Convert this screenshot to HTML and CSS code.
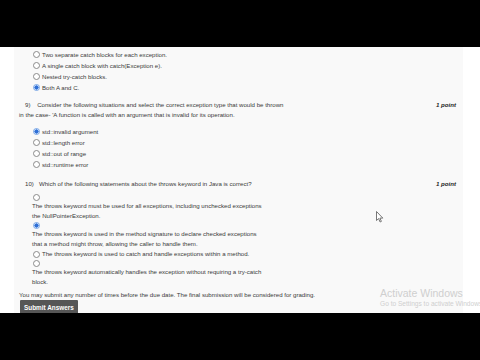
FILE: index.html
```html
<!DOCTYPE html>
<html>
<head>
<meta charset="utf-8">
<link rel="stylesheet" href="styles.css">
</head>
<body>
<div class="topbar"></div>
<div class="stage">
  <div class="panel">
    <div class="opts q8">
      <div class="opt"><span class="radio"></span>Two separate catch blocks for each exception.</div>
      <div class="opt"><span class="radio"></span>A single catch block with catch(Exception e).</div>
      <div class="opt"><span class="radio"></span>Nested try-catch blocks.</div>
      <div class="opt"><span class="radio on"></span>Both A and C.</div>
    </div>

    <div class="qhead q9">
      <div class="qtext">9)&nbsp;&nbsp;&nbsp; Consider the following situations and select the correct exception type that would be thrown<br>in the case- 'A function is called with an argument that is invalid for its operation.</div>
      <div class="points">1 point</div>
    </div>
    <div class="opts q9opts">
      <div class="opt"><span class="radio on"></span>std::invalid argument</div>
      <div class="opt"><span class="radio"></span>std::length error</div>
      <div class="opt"><span class="radio"></span>std::out of range</div>
      <div class="opt"><span class="radio"></span>std::runtime error</div>
    </div>

    <div class="qhead q10">
      <div class="qtext">10)&nbsp;&nbsp; Which of the following statements about the throws keyword in Java is correct?</div>
      <div class="points">1 point</div>
    </div>
    <div class="longopts">
      <div class="lopt">
        <div class="rline"><span class="radio"></span></div>
        <div class="ltext">The throws keyword must be used for all exceptions, including unchecked exceptions<br>the NullPointerException.</div>
      </div>
      <div class="lopt">
        <div class="rline"><span class="radio on"></span></div>
        <div class="ltext">The throws keyword is used in the method signature to declare checked exceptions<br>that a method might throw, allowing the caller to handle them.</div>
      </div>
      <div class="lopt inline">
        <div class="ltext"><span class="radio"></span>The throws keyword is used to catch and handle exceptions within a method.</div>
      </div>
      <div class="lopt">
        <div class="rline"><span class="radio"></span></div>
        <div class="ltext">The throws keyword automatically handles the exception without requiring a try-catch<br>block.</div>
      </div>
    </div>

    <div class="note">You may submit any number of times before the due date. The final submission will be considered for grading.</div>
    <div class="btn">Submit Answers</div>
  </div>

  <div class="activate">
    <div class="a1">Activate Windows</div>
    <div class="a2">Go to Settings to activate Windows.</div>
  </div>

  <svg class="cursor" width="8" height="12" viewBox="0 0 8 12">
    <path d="M0.5 0.5 L0.5 9.5 L2.6 7.6 L4.1 11 L5.4 10.4 L3.9 7.1 L6.8 7.1 Z" fill="#fff" stroke="#555" stroke-width="0.8"/>
  </svg>
</div>
<div class="bottombar"></div>
</body>
</html>
```

FILE: styles.css
```css
html, body {
  margin: 0;
  padding: 0;
  background: #000;
}
body {
  width: 480px;
  height: 360px;
  overflow: hidden;
  font-family: "Liberation Sans", Arial, sans-serif;
  font-size: 6.1px;
  color: #3a3a3a;
}
.topbar {
  height: 47px;
  background: #000;
}
.bottombar {
  height: 47px;
  background: #000;
}
.stage {
  position: relative;
  height: 266px;
  background: #fff;
  overflow: hidden;
}
.panel {
  margin-left: 14px;
  width: 449px;
  height: 266px;
  background: #f9f9f9;
  box-sizing: border-box;
  padding-top: 2px;
}
.opts {
  padding-left: 19px;
}
.opt {
  height: 11px;
  line-height: 11px;
  display: flex;
  align-items: center;
  white-space: nowrap;
}
.radio {
  display: inline-block;
  width: 5px;
  height: 5px;
  border: 0.8px solid #8a8a8a;
  border-radius: 50%;
  background: #fff;
  margin-right: 2px;
  flex: none;
  box-sizing: content-box;
  vertical-align: middle;
}
.radio.on {
  border-color: #7aa7e6;
  background: radial-gradient(circle, #2f6fd6 0 55%, #cfe0fa 60% 100%);
}
.qhead {
  display: flex;
  align-items: flex-start;
  padding-left: 5px;
  padding-right: 7px;
}
.q9 {
  margin-top: 7px;
}
.qtext {
  flex: 1;
  line-height: 10px;
  text-indent: 6px;
  white-space: nowrap;
}
.points {
  font-weight: bold;
  font-style: italic;
  color: #222;
  line-height: 10px;
  white-space: nowrap;
}
.q9opts {
  margin-top: 6px;
}
.q10 {
  margin-top: 9px;
}
.longopts {
  padding-left: 18px;
  margin-top: 4px;
}
.lopt {
  line-height: 10px;
}
.rline {
  height: 8px;
  display: flex;
  align-items: center;
  padding-left: 1px;
}
.ltext {
  white-space: nowrap;
}
.lopt.inline .ltext {
  display: flex;
  align-items: center;
  padding-left: 1px;
}
.note {
  margin-top: 3px;
  padding-left: 5px;
  line-height: 10px;
  white-space: nowrap;
}
.btn {
  display: inline-block;
  margin-left: 6px;
  margin-top: 0px;
  background: #565656;
  color: #fff;
  font-weight: bold;
  font-size: 6.4px;
  padding: 3px 4px;
  line-height: 9px;
  border-radius: 1px;
}
.activate {
  position: absolute;
  left: 380px;
  top: 240px;
  color: #cfcfcf;
  white-space: nowrap;
}
.a1 {
  font-size: 10.5px;
  line-height: 13px;
}
.a2 {
  font-size: 6.6px;
  line-height: 8px;
}
.cursor {
  position: absolute;
  left: 376px;
  top: 164px;
}
```
